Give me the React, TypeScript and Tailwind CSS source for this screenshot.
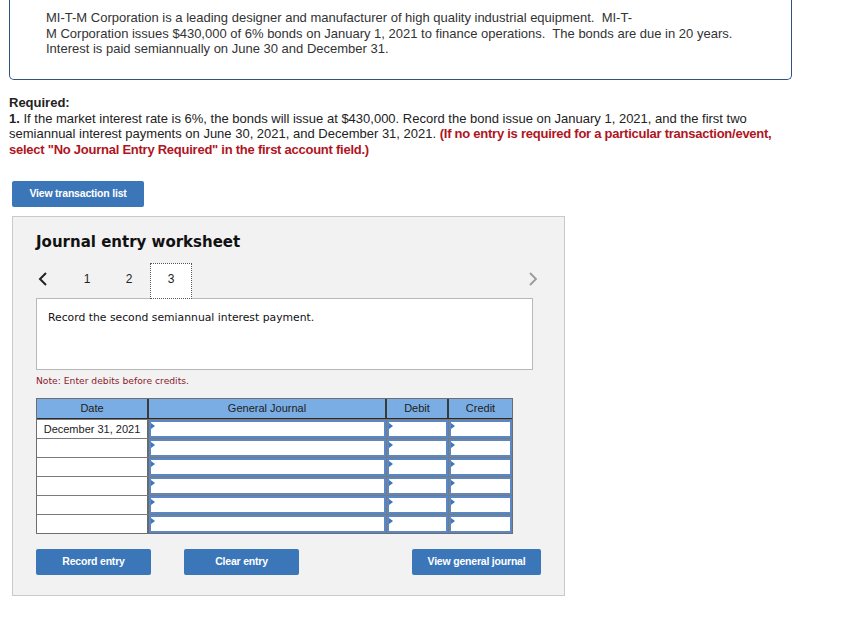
import React from "react";

const sans = "font-['Liberation_Sans',Arial,sans-serif]";
const verd = "font-['DejaVu_Sans',Verdana,sans-serif]";

function InputCell({ w }: { w: string }) {
  return (
    <div className={`${w} h-full border-r border-[#7a7a7a] last:border-r-0 p-0`}>
      <div className="relative h-full border-2 border-[#5b88c4] bg-white">
        <div className="absolute top-[1px] left-0 w-0 h-0 border-y-[3px] border-y-transparent border-l-[4px] border-l-[#3a76c2]" />
      </div>
    </div>
  );
}

function Row({ date }: { date?: string }) {
  return (
    <div className="flex h-[19px] border-t border-[#7a7a7a]">
      <div className={`w-[112px] border-r-2 border-[#6a6a6a] bg-white flex items-center justify-center text-[11px] text-[#222] ${sans}`}>
        {date ?? ""}
      </div>
      <InputCell w="w-[238px]" />
      <InputCell w="w-[62px]" />
      <InputCell w="w-[63px]" />
    </div>
  );
}

function Btn({ children, w }: { children: React.ReactNode; w: string }) {
  return (
    <button className={`${w} h-[26px] rounded-[2px] bg-[#3b76b9] text-white text-[10.5px] font-bold ${sans} tracking-[-0.2px] flex items-center justify-center`}>
      {children}
    </button>
  );
}

export default function App() {
  return (
    <div className={`w-[863px] h-[626px] bg-white overflow-hidden text-[#222] ${sans}`}>
      {/* top problem box */}
      <div className="ml-[9px] w-[783px] h-[80px] border-x-[1.5px] border-b-[1.5px] border-[#2f5282] rounded-b-[5px] pl-[36px] pt-[10px] text-[13px] leading-[15.5px] text-[#333]">
        <div>MI-T-M Corporation is a leading designer and manufacturer of high quality industrial equipment.&nbsp; MI-T-</div>
        <div>M Corporation issues $430,000 of 6% bonds on January 1, 2021 to finance operations.&nbsp; The bonds are due in 20 years.</div>
        <div>Interest is paid semiannually on June 30 and December 31.</div>
      </div>

      {/* required */}
      <div className="mt-[15px] ml-[9px] text-[13px] leading-[15.5px] text-[#222]">
        <div className="font-bold">Required:</div>
        <div>
          <span className="font-bold">1.</span> If the market interest rate is 6%, the bonds will issue at $430,000. Record the bond issue on January 1, 2021, and the first two
        </div>
        <div>
          semiannual interest payments on June 30, 2021, and December 31, 2021.{" "}
          <span className="font-bold text-[#b0141e] tracking-[-0.25px]">(If no entry is required for a particular transaction/event,</span>
        </div>
        <div className="font-bold text-[#b0141e] tracking-[-0.25px]">select "No Journal Entry Required" in the first account field.)</div>
      </div>

      <div className="mt-[24px] ml-[12px]">
        <Btn w="w-[132px]">View transaction list</Btn>
      </div>

      {/* worksheet panel */}
      <div className="mt-[9px] ml-[12px] w-[553px] h-[380px] bg-[#f2f2f2] border border-[#c9c9c9] pl-[23px] pt-[14px]">
        <div className={`${verd} font-bold text-[15px] leading-[22px] text-[#111]`}>Journal entry worksheet</div>

        <div className="mt-[10px] flex items-end h-[35px] w-[496px] relative">
          <div className="w-[30px] h-full flex items-center">
            <svg width="10" height="14" viewBox="0 0 10 14" className="ml-[2px] -mt-[4px]">
              <polyline points="8,1 2,7 8,13" fill="none" stroke="#222" strokeWidth="2" />
            </svg>
          </div>
          <div className={`w-[42px] h-full flex items-center justify-center text-[12px] ${sans} pb-[4px]`}>1</div>
          <div className={`w-[42px] h-full flex items-center justify-center text-[12px] ${sans} pb-[4px]`}>2</div>
          <div className={`w-[42px] h-[36px] -mb-[1px] bg-white border border-dotted border-[#555] flex items-center justify-center text-[12px] ${sans} pb-[4px] z-10`}>3</div>
          <div className="flex-1" />
          <div className="h-full flex items-center mr-[-6px]">
            <svg width="10" height="14" viewBox="0 0 10 14" className="-mt-[4px]">
              <polyline points="2,1 8,7 2,13" fill="none" stroke="#9a9a9a" strokeWidth="1.8" />
            </svg>
          </div>
        </div>

        <div className="w-[497px] h-[72px] bg-white border border-[#b8b8b8] pl-[11px] pt-[11px]">
          <div className={`${verd} text-[10.8px] text-[#111]`}>Record the second semiannual interest payment.</div>
        </div>

        <div className={`${verd} mt-[4px] text-[9.2px] text-[#8b1a2c]`}>Note: Enter debits before credits.</div>

        <div className="mt-[10px] w-[477px] border-[1.5px] border-[#6e6e6e] bg-white">
          <div className={`flex h-[21px] bg-[#79ade3] border-b-2 border-[#2a2a2a] text-[11px] text-[#222] ${sans}`}>
            <div className="w-[112px] border-r-2 border-[#3a3a3a] flex items-center justify-center">Date</div>
            <div className="w-[238px] border-r-2 border-[#3a3a3a] flex items-center justify-center">General Journal</div>
            <div className="w-[62px] border-r-2 border-[#3a3a3a] flex items-center justify-center">Debit</div>
            <div className="w-[63px] flex items-center justify-center">Credit</div>
          </div>
          <div className="-mt-px">
            <Row date="December 31, 2021" />
            <Row />
            <Row />
            <Row />
            <Row />
            <Row />
          </div>
        </div>

        <div className="mt-[15px] flex">
          <Btn w="w-[115px]">Record entry</Btn>
          <div className="w-[33px]" />
          <Btn w="w-[115px]">Clear entry</Btn>
          <div className="w-[113px]" />
          <Btn w="w-[129px]">View general journal</Btn>
        </div>
      </div>
    </div>
  );
}
